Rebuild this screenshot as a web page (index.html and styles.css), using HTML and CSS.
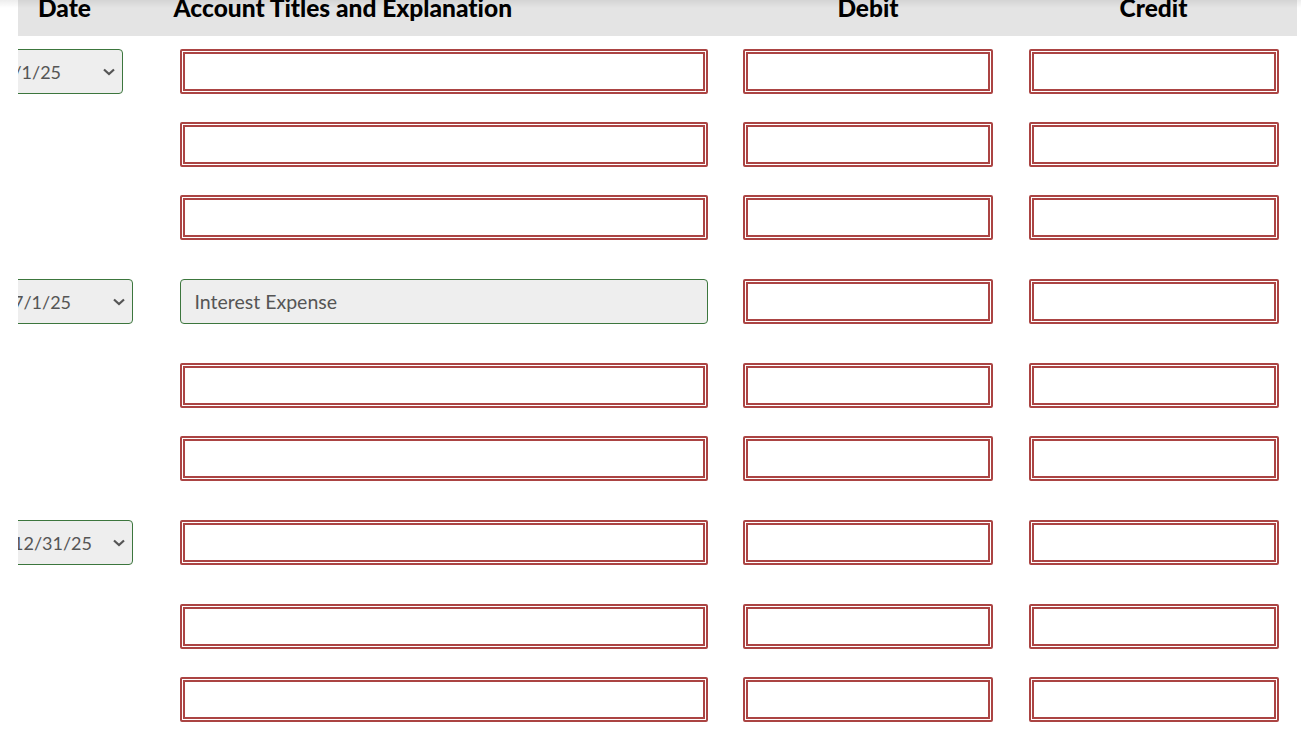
FILE: index.html
```html
<!DOCTYPE html>
<html lang="en">
<head>
<meta charset="utf-8">
<title>Journal Entry</title>
<link rel="stylesheet" href="styles.css">
</head>
<body>
<div class="top-shadow"></div>
<div class="sheet">
  <div class="head">
    <div class="h-date">Date</div>
    <div class="h-acct">Account Titles and Explanation</div>
    <div class="h-num">Debit</div>
    <div class="h-num">Credit</div>
  </div>

  <div class="body">
    <div class="row first">
      <div class="date-cell">
        <div class="select shift"><span>7/1/25</span>
          <svg class="chev" width="12" height="8" viewBox="0 0 12 8"><path d="M1 1.5 L6 6 L11 1.5" fill="none" stroke="#555" stroke-width="2.2"/></svg>
        </div>
      </div>
      <div class="field bad"></div>
      <div class="field bad"></div>
      <div class="field bad"></div>
    </div>
    <div class="row">
      <div class="date-cell"></div>
      <div class="field bad"></div>
      <div class="field bad"></div>
      <div class="field bad"></div>
    </div>
    <div class="row">
      <div class="date-cell"></div>
      <div class="field bad"></div>
      <div class="field bad"></div>
      <div class="field bad"></div>
    </div>

    <div class="row lead">
      <div class="date-cell">
        <div class="select"><span>7/1/25</span>
          <svg class="chev" width="12" height="8" viewBox="0 0 12 8"><path d="M1 1.5 L6 6 L11 1.5" fill="none" stroke="#555" stroke-width="2.2"/></svg>
        </div>
      </div>
      <div class="field ok">Interest Expense</div>
      <div class="field bad"></div>
      <div class="field bad"></div>
    </div>
    <div class="row">
      <div class="date-cell"></div>
      <div class="field bad"></div>
      <div class="field bad"></div>
      <div class="field bad"></div>
    </div>
    <div class="row">
      <div class="date-cell"></div>
      <div class="field bad"></div>
      <div class="field bad"></div>
      <div class="field bad"></div>
    </div>

    <div class="row lead">
      <div class="date-cell">
        <div class="select"><span>12/31/25</span>
          <svg class="chev" width="12" height="8" viewBox="0 0 12 8"><path d="M1 1.5 L6 6 L11 1.5" fill="none" stroke="#555" stroke-width="2.2"/></svg>
        </div>
      </div>
      <div class="field bad"></div>
      <div class="field bad"></div>
      <div class="field bad"></div>
    </div>
    <div class="row">
      <div class="date-cell"></div>
      <div class="field bad"></div>
      <div class="field bad"></div>
      <div class="field bad"></div>
    </div>
    <div class="row">
      <div class="date-cell"></div>
      <div class="field bad"></div>
      <div class="field bad"></div>
      <div class="field bad"></div>
    </div>
  </div>
</div>
</body>
</html>
```

FILE: styles.css
```css
html, body {
  margin: 0;
  padding: 0;
  background: #fff;
  overflow: hidden;
}

body {
  font-family: Lato, "Open Sans", "Liberation Sans", sans-serif;
  color: #555;
  width: 1301px;
  height: 734px;
  position: relative;
}

.top-shadow {
  position: absolute;
  left: 0;
  top: 0;
  width: 1301px;
  height: 8px;
  background: linear-gradient(to bottom, rgba(0,0,0,0.07), rgba(0,0,0,0));
  pointer-events: none;
  z-index: 2;
}

.sheet {
  margin-left: 18px;
  width: 1279px;
}

.head {
  display: grid;
  grid-template-columns: 126px 528px 250px 250px;
  column-gap: 35.5px;
  height: 36px;
  background: #e4e4e4;
  font-weight: 900;
  font-size: 24.5px;
  line-height: 16px;
  color: #000;
  font-variant-ligatures: none;
  font-feature-settings: "liga" 0;
}

.h-date {
  padding-left: 20px;
}

.h-acct {
  margin-left: -6px;
  white-space: nowrap;
}

.h-num {
  text-align: center;
}

.body {
  display: flex;
  flex-direction: column;
  gap: 28px;
  padding-top: 13px;
}

.row {
  display: grid;
  grid-template-columns: 126px 528px 250px 250px;
  column-gap: 35.5px;
  height: 45px;
}

.row.lead {
  margin: 11px 0;
}

.date-cell {
  overflow: hidden;
  height: 45px;
}

.select {
  box-sizing: border-box;
  width: 131px;
  height: 45px;
  margin-left: -16px;
  border: 1px solid #3c763d;
  border-radius: 4px;
  background: #eee;
  display: flex;
  align-items: center;
  justify-content: space-between;
  padding: 0 7px 0 10px;
  font-size: 18px;
  color: #555;
}

.select.shift {
  margin-left: -26px;
}

.chev {
  display: block;
}

.field {
  box-sizing: border-box;
  height: 45px;
  font-size: 19.5px;
  color: #555;
}

.field.bad {
  border: 2px solid #ab4443;
  border-radius: 2px;
  background: #fff;
  box-shadow: inset 0 0 0 1px #fff, inset 0 0 0 3px #ab4443;
}

.field.ok {
  border: 1px solid #3c763d;
  border-radius: 4px;
  background: #eee;
  display: flex;
  align-items: center;
  padding-left: 14px;
}
```
